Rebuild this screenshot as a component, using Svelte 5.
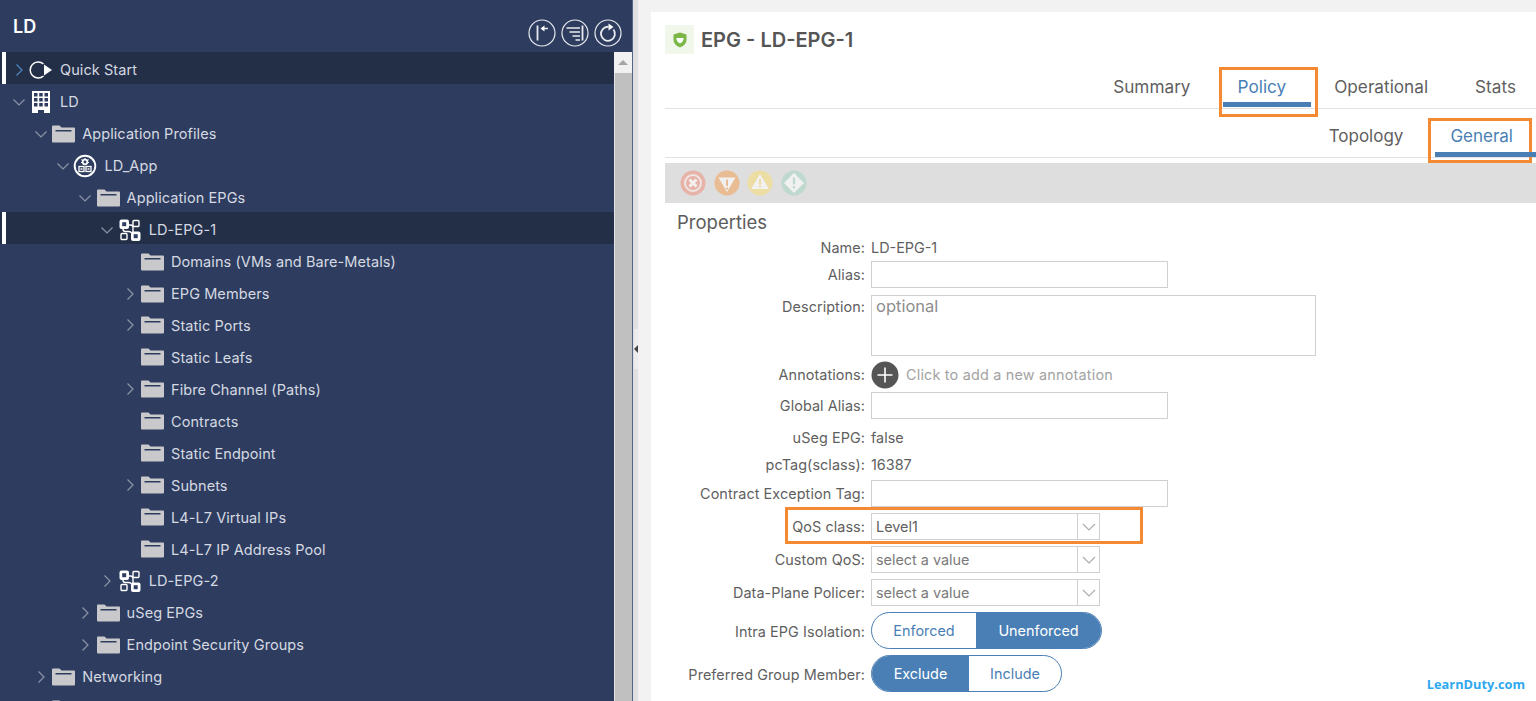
<script>
    const tree = [
        { label: "Quick Start", level: 0, arrow: "right", icon: "quick", selected: true, blue: true },
        { label: "LD", level: 0, arrow: "down", icon: "building" },
        { label: "Application Profiles", level: 1, arrow: "down", icon: "folder" },
        { label: "LD_App", level: 2, arrow: "down", icon: "app" },
        { label: "Application EPGs", level: 3, arrow: "down", icon: "folder" },
        { label: "LD-EPG-1", level: 4, arrow: "down", icon: "epg", selected: true },
        { label: "Domains (VMs and Bare-Metals)", level: 5, icon: "folder" },
        { label: "EPG Members", level: 5, arrow: "right", icon: "folder" },
        { label: "Static Ports", level: 5, arrow: "right", icon: "folder" },
        { label: "Static Leafs", level: 5, icon: "folder" },
        { label: "Fibre Channel (Paths)", level: 5, arrow: "right", icon: "folder" },
        { label: "Contracts", level: 5, icon: "folder" },
        { label: "Static Endpoint", level: 5, icon: "folder" },
        { label: "Subnets", level: 5, arrow: "right", icon: "folder" },
        { label: "L4-L7 Virtual IPs", level: 5, icon: "folder" },
        { label: "L4-L7 IP Address Pool", level: 5, icon: "folder" },
        { label: "LD-EPG-2", level: 4, arrow: "right", icon: "epg" },
        { label: "uSeg EPGs", level: 3, arrow: "right", icon: "folder" },
        { label: "Endpoint Security Groups", level: 3, arrow: "right", icon: "folder" },
        { label: "Networking", level: 1, arrow: "right", icon: "folder" },
        { icon: "folder", level: 1, arrow: "right", label: "" }
    ];
</script>

{#snippet chevron(dir)}
    <svg class="chev" width="14" height="14" viewBox="0 0 14 14" fill="none" stroke="currentColor" stroke-width="1.2">
        {#if dir === "down"}
            <path d="M1.5 4.500 7 10l5.500-5.500" />
        {:else}
            <path d="M4.500 1.500 10 7l-5.500 5.500" />
        {/if}
    </svg>
{/snippet}

{#snippet treeIcon(name)}
    {#if name === "folder"}
        <svg width="24" height="18" viewBox="0 0 24 18">
            <path d="M1 1.500q0-1 1-1h6.500l2 2H23q1 0 1 1V16.500q0 1-1 1H2q-1 0-1-1z" fill="#c9c9cb" />
            <rect x="4.500" y="5" width="16" height="1.500" fill="#2e3d5f" />
        </svg>
    {:else if name === "building"}
        <svg width="20" height="24" viewBox="0 0 20 24">
            <path d="M1 1h18v22h-6v-3H7v3H1z" fill="#fff" />
            <g fill="#2e3d5f">
                <rect x="3" y="3" width="3.500" height="3.500" /><rect x="8.200" y="3" width="3.500" height="3.500" /><rect x="13.500" y="3" width="3.500" height="3.500" />
                <rect x="3" y="8" width="3.500" height="3.500" /><rect x="8.200" y="8" width="3.500" height="3.500" /><rect x="13.500" y="8" width="3.500" height="3.500" />
                <rect x="3" y="13" width="3.500" height="3.500" /><rect x="8.200" y="13" width="3.500" height="3.500" /><rect x="13.500" y="13" width="3.500" height="3.500" />
            </g>
        </svg>
    {:else if name === "quick"}
        <svg width="24" height="18" viewBox="0 0 24 18" fill="none">
            <path d="M14.500 3A8 8 0 1 0 14.500 15" stroke="#fff" stroke-width="1.500" />
            <path d="M15 3.500 23 9l-8 5.500z" fill="#fff" />
        </svg>
    {:else if name === "app"}
        <svg width="24" height="24" viewBox="0 0 24 24" fill="none" stroke="#fff">
            <circle cx="12" cy="12" r="10.300" stroke-width="1.900" />
            <circle cx="12" cy="8" r="2.300" stroke-width="1.700" />
            <path d="M12 4v1.500M8.500 5.500 10 6.800M15.500 5.500 14 6.800M8 8.500h1.500M14.500 8.500H16" stroke-width="1.100" />
            <rect x="6" y="12.500" width="5" height="5" stroke-width="1.300" />
            <rect x="13" y="12.500" width="5" height="5" stroke-width="1.300" />
            <path d="M7.500 14h2v2h-2zM14.500 14h2v2h-2z" fill="#c9c9cb" stroke="none" />
        </svg>
    {:else if name === "epg"}
        <svg width="24" height="24" viewBox="0 0 24 24" fill="none" stroke="#fff">
            <path d="M5 11q0 2.500 2.500 2.500h3q2.500 0 3 1.500M11 7h1.500q2.500 0 2.500 2.500V14" stroke-width="1.400" />
            <rect x="1.500" y="1.500" width="9.500" height="9.500" rx="2" fill="#fff" stroke="none" />
            <rect x="4.200" y="4.200" width="4" height="4" fill="#2e3d5f" stroke="none" />
            <rect x="15" y="2.500" width="6" height="6" rx="1" stroke-width="1.400" />
            <rect x="3" y="15.500" width="6" height="6" rx="1" stroke-width="1.400" />
            <rect x="13" y="13.500" width="9.500" height="9.500" rx="2" fill="#fff" stroke="none" />
            <rect x="15.700" y="16.200" width="4" height="4" fill="#2e3d5f" stroke="none" />
        </svg>
    {/if}
{/snippet}

{#snippet field(label)}
    <span class="label">{label}</span>
{/snippet}

{#snippet dropdown(value, placeholder)}
    <div class="select" class:placeholder>
        <span class="select-value">{value}</span>
        <span class="select-btn">
            <svg width="14" height="14" viewBox="0 0 14 14" fill="none" stroke="#aaa" stroke-width="1.100">
                <path d="M1 4 7 10l6-6" />
            </svg>
        </span>
    </div>
{/snippet}

<div class="page">
    <aside class="sidebar">
        <header class="side-head">
            <h1>LD</h1>
            <div class="head-icons">
                <svg width="28" height="28" viewBox="0 0 28 28" fill="none" stroke="#e8eaef" stroke-width="1.200">
                    <circle cx="14" cy="14" r="13" />
                    <path d="M9.500 6.500v15" stroke-width="1.800" />
                    <path d="M14 9.500h6" stroke-width="1.500" />
                    <path d="M16.500 6.500l-4 3 4 3z" fill="#fff" stroke="none" />
                </svg>
                <svg width="28" height="28" viewBox="0 0 28 28" fill="none" stroke="#e8eaef" stroke-width="1.200">
                    <circle cx="14" cy="14" r="13" />
                    <path d="M5.500 9h13.500M8.500 13H19M11.500 17H19M14.500 21H19" stroke-width="1.400" />
                    <path d="M21.500 6.500v15" stroke-width="1.800" />
                </svg>
                <svg width="28" height="28" viewBox="0 0 28 28" fill="none" stroke="#e8eaef" stroke-width="1.200">
                    <circle cx="14" cy="14" r="13" />
                    <path d="M14.500 7.800A7 7 0 1 0 19.500 10.500" stroke-width="1.800" />
                    <path d="M14.500 4.500l5 3.500-5 3.500z" fill="#fff" stroke="none" />
                </svg>
            </div>
        </header>
        <div class="side-body">
            <nav class="tree">
                {#each tree as node}
                    <div class="row" class:selected={node.selected} class:blue={node.blue}>
                        <span class="indent" style="width: {node.level * 22.2}px"></span>
                        <span class="chev-slot">
                            {#if node.arrow}{@render chevron(node.arrow)}{/if}
                        </span>
                        <span class="icon-slot">{@render treeIcon(node.icon)}</span>
                        <span class="row-label">{node.label}</span>
                    </div>
                {/each}
            </nav>
            <div class="scrollbar">
                <div class="scroll-up"><span class="scroll-arrow"></span></div>
                <div class="scroll-thumb"></div>
            </div>
        </div>
    </aside>

    <div class="gutter">
        <div class="handle"><span class="handle-arrow"></span></div>
    </div>

    <main class="content">
        <div class="panel">
            <div class="title-row">
                <span class="title-icon">
                    <svg width="14" height="16" viewBox="0 0 14 16">
                        <path d="M7 .5 13.500 2.500V8q0 4.500-6.500 7.500Q.5 12.500.5 8V2.500z" fill="#7ab648" />
                        <path d="M3.500 6h7v1.500Q10 10 7 11.500 4 10 3.500 7.500z" fill="#fff" />
                    </svg>
                </span>
                <h2>EPG - LD-EPG-1</h2>
            </div>

            <div class="tabs tabs-main">
                <span class="tab">Summary</span>
                <span class="tab active">Policy<i class="mark mark-policy"></i></span>
                <span class="tab">Operational</span>
                <span class="tab">Stats</span>
            </div>
            <div class="tabs tabs-sub">
                <span class="tab">Topology</span>
                <span class="tab active">General<i class="mark mark-general"></i></span>
            </div>

            <div class="fault-bar">
                <svg width="26" height="26" viewBox="0 0 26 26">
                    <circle cx="13" cy="13" r="12.500" fill="#e7b3a8" />
                    <circle cx="13" cy="13" r="8" fill="none" stroke="#efe6e3" stroke-width="2" />
                    <path d="M9.500 9.500l7 7M16.500 9.500l-7 7" stroke="#f4f0ee" stroke-width="3" />
                </svg>
                <svg width="26" height="26" viewBox="0 0 26 26">
                    <circle cx="13" cy="13" r="12.500" fill="#e9bc93" />
                    <path d="M4.500 7.500h17L13 22z" fill="#f1f1f1" />
                    <path d="M13 9.500v6.500M13 17.500v2" stroke="#e9bc93" stroke-width="2" />
                </svg>
                <svg width="26" height="26" viewBox="0 0 26 26">
                    <circle cx="13" cy="13" r="12.500" fill="#ecdda3" />
                    <path d="M13 4 22 19H4z" fill="#f1f1f1" />
                    <path d="M13 9v5.500M13 15.500v2" stroke="#ecdda3" stroke-width="2" />
                </svg>
                <svg width="26" height="26" viewBox="0 0 26 26">
                    <circle cx="13" cy="13" r="12.500" fill="#bfd9cf" />
                    <path d="M13 3 23 13 13 23 3 13z" fill="#f1f1f1" />
                    <path d="M13 7.500v7M13 16v2.500" stroke="#bfd9cf" stroke-width="2.200" />
                </svg>
            </div>

            <h3>Properties</h3>

            <div class="form">
                <div class="form-row r-name">{@render field("Name:")}<span class="value">LD-EPG-1</span></div>
                <div class="form-row r-input">{@render field("Alias:")}<div class="input"></div></div>
                <div class="form-row r-desc">{@render field("Description:")}<div class="textarea">optional</div></div>
                <div class="form-row r-anno">
                    {@render field("Annotations:")}
                    <span class="add-btn">
                        <svg width="28" height="28" viewBox="0 0 28 28">
                            <circle cx="14" cy="14" r="13.500" fill="#555" />
                            <path d="M14 6.500v15M6.500 14h15" stroke="#fff" stroke-width="1.600" />
                        </svg>
                    </span>
                    <span class="hint">Click to add a new annotation</span>
                </div>
                <div class="form-row r-input r-global">{@render field("Global Alias:")}<div class="input"></div></div>
                <div class="form-row r-text r-useg">{@render field("uSeg EPG:")}<span class="value">false</span></div>
                <div class="form-row r-text r-pc">{@render field("pcTag(sclass):")}<span class="value">16387</span></div>
                <div class="form-row r-input r-contract">{@render field("Contract Exception Tag:")}<div class="input"></div></div>
                <div class="form-row r-select r-qos">
                    {@render field("QoS class:")}
                    {@render dropdown("Level1", false)}
                    <i class="mark mark-qos"></i>
                </div>
                <div class="form-row r-select">{@render field("Custom QoS:")}{@render dropdown("select a value", true)}</div>
                <div class="form-row r-select">{@render field("Data-Plane Policer:")}{@render dropdown("select a value", true)}</div>
                <div class="form-row r-toggle">
                    {@render field("Intra EPG Isolation:")}
                    <div class="toggle">
                        <span class="opt opt-enforced">Enforced</span>
                        <span class="opt on opt-unenforced">Unenforced</span>
                    </div>
                </div>
                <div class="form-row r-toggle r-pref">
                    {@render field("Preferred Group Member:")}
                    <div class="toggle">
                        <span class="opt on opt-exclude">Exclude</span>
                        <span class="opt opt-include">Include</span>
                    </div>
                </div>
            </div>
            <span class="watermark">LearnDuty.com</span>
        </div>
    </main>
</div>

<style>
    :global(body) {
        margin: 0;
        background: #f2f2f2;
    }

    .page {
        display: flex;
        width: 1536px;
        height: 701px;
        overflow: hidden;
        font-family: Inter, "Liberation Sans", sans-serif;
    }

    /* left tree */
    .sidebar {
        width: 632px;
        flex: none;
        display: flex;
        flex-direction: column;
        background: #2e3d5f;
        border-right: 1px solid #55648a;
    }

    .side-head {
        height: 52px;
        flex: none;
        display: flex;
        align-items: center;
        justify-content: space-between;
        padding: 0 10px 0 13px;
    }

    .side-head h1 {
        margin: 0;
        font-size: 18px;
        font-weight: 600;
        color: #fff;
    }

    .head-icons {
        display: flex;
        gap: 5px;
        margin-top: 14px;
    }

    .side-body {
        flex: 1;
        display: flex;
        min-height: 0;
    }

    .tree {
        width: 614px;
        flex: none;
    }

    .row {
        height: 31.95px;
        display: flex;
        align-items: center;
        color: #d5d9e2;
        font-size: 14.5px;
        letter-spacing: 0.08px;
        white-space: nowrap;
        box-sizing: border-box;
        padding: 4px 0 0 6px;
    }

    .row.selected {
        background: #232f47;
        position: relative;
    }

    .row.selected::before {
        content: "";
        position: absolute;
        left: 2px;
        top: 0;
        bottom: 0;
        width: 4px;
        background: #fff;
    }

    .indent {
        flex: none;
    }

    .chev-slot {
        width: 13px;
        flex: none;
        display: flex;
        justify-content: center;
        color: #8c94a6;
        margin-left: 6px;
    }

    .row.blue .chev-slot {
        color: #4f86c0;
    }

    .chev {
        display: block;
        flex: none;
    }

    .icon-slot {
        width: 24px;
        flex: none;
        display: flex;
        justify-content: center;
        margin-left: 4px;
    }

    .icon-slot svg {
        display: block;
    }

    .row-label {
        margin-left: 7px;
    }

    .scrollbar {
        width: 18px;
        flex: none;
        display: flex;
        flex-direction: column;
        background: #c0c0c0;
    }

    .scroll-up {
        height: 21px;
        background: #f1f1f1;
        display: flex;
        align-items: center;
        justify-content: center;
    }

    .scroll-arrow {
        width: 0;
        height: 0;
        border-left: 5px solid transparent;
        border-right: 5px solid transparent;
        border-bottom: 5px solid #a5a5a5;
    }

    .scroll-thumb {
        flex: 1;
        border-left: 1px solid #e4e4e4;
    }

    /* splitter */
    .gutter {
        width: 5px;
        flex: none;
        background: #e0e0e0;
        display: flex;
        align-items: center;
        justify-content: center;
        padding-bottom: 4px;
        box-sizing: border-box;
    }

    .handle {
        width: 4px;
        height: 40px;
        background: #ececec;
        display: flex;
        align-items: center;
        justify-content: center;
    }

    .handle-arrow {
        width: 0;
        height: 0;
        border-top: 4px solid transparent;
        border-bottom: 4px solid transparent;
        border-right: 4px solid #444;
    }

    /* right panel */
    .content {
        flex: 1;
        min-width: 0;
        background: #f2f2f2;
        padding: 12px 0 0 13px;
    }

    .panel {
        position: relative;
        height: 100%;
        background: #fff;
        padding-left: 14px;
        color: #5c5c5c;
    }

    .title-row {
        height: 29px;
        padding-top: 13px;
        display: flex;
        align-items: center;
        gap: 7px;
    }

    .title-icon {
        width: 29px;
        height: 29px;
        background: #f1f7ea;
        display: flex;
        align-items: center;
        justify-content: center;
    }

    .title-row h2 {
        margin: 0;
        font-size: 20px;
        font-weight: 600;
        color: #555;
    }

    .tabs {
        display: flex;
        justify-content: flex-end;
        border-bottom: 1px solid #e2e2e2;
        font-size: 17px;
        box-sizing: border-box;
    }

    .tabs-main {
        height: 55px;
        padding-top: 21px;
        font-size: 17.2px;
    }

    .tabs-sub {
        height: 49px;
        padding-top: 15px;
    }

    .tab {
        position: relative;
        color: #5f5f5f;
        line-height: 24px;
    }

    .tab.active {
        color: #4a7fb5;
    }

    .tabs-main .tab:nth-child(1) { margin-right: 47px; }
    .tabs-main .tab:nth-child(2) { margin-right: 48px; }
    .tabs-main .tab:nth-child(3) { margin-right: 47px; }
    .tabs-main .tab:nth-child(4) { margin-right: 20px; }
    .tabs-sub .tab:nth-child(1) { margin-right: 47px; }
    .tabs-sub .tab:nth-child(2) { margin-right: 23px; }

    .mark {
        position: absolute;
        display: block;
        box-sizing: border-box;
        border: 3px solid #f58a33;
        pointer-events: none;
    }

    .mark-policy {
        left: -19px;
        top: -8px;
        width: 99px;
        height: 50px;
    }

    .mark-policy::after,
    .mark-general::after {
        content: "";
        position: absolute;
        height: 5px;
        background: #4a7fb5;
    }

    .mark-policy::after {
        left: 1px;
        right: 4px;
        bottom: 7px;
    }

    .mark-general {
        left: -22px;
        top: -6px;
        width: 104px;
        height: 45px;
    }

    .mark-general::after {
        left: 4px;
        right: -7px;
        bottom: 3px;
    }

    .fault-bar {
        height: 40px;
        margin-top: 5px;
        background: #dedede;
        display: flex;
        align-items: center;
        gap: 7.500px;
        padding-left: 15px;
    }

    .fault-bar svg {
        display: block;
    }

    h3 {
        margin: 0;
        padding: 1px 0 0 12px;
        font-size: 18.500px;
        font-weight: 400;
        line-height: 36px;
        color: #5c5c5c;
    }

    .form {
        font-size: 14.4px;
    }

    .form-row {
        position: relative;
        display: flex;
        align-items: center;
        gap: 6px;
        height: 27px;
    }

    .label {
        width: 200px;
        flex: none;
        text-align: right;
        color: #5f5f5f;
        white-space: nowrap;
        letter-spacing: 0.08px;
    }

    .value {
        color: #5f5f5f;
    }

    .r-name { height: 27px; margin-top: -6px; }
    .r-desc { height: 61px; margin-top: 7px; align-items: flex-start; }
    .r-desc .label { padding-top: 3px; }
    .r-anno { height: 27px; margin-top: 5px; }
    .r-global { margin-top: 4px; }
    .r-useg { margin-top: 5px; }
    .r-pc { margin-top: 0; }
    .r-contract { margin-top: 2px; }
    .r-qos { margin-top: 6px; }
    .r-select { height: 27px; margin-bottom: 6px; }
    .r-toggle { height: 37px; margin-bottom: 6px; margin-top: 1px; }
    .r-pref { margin-top: 0; }
    .r-toggle .label { padding-top: 2px; }

    .input {
        width: 297px;
        height: 27px;
        box-sizing: border-box;
        border: 1px solid #d0d0d0;
        background: #fff;
    }

    .textarea {
        width: 445px;
        height: 61px;
        box-sizing: border-box;
        border: 1px solid #d0d0d0;
        padding: 0 4px;
        font-size: 16.500px;
        color: #8d8d8d;
    }

    .add-btn {
        width: 28px;
        height: 28px;
        flex: none;
    }

    .add-btn svg {
        display: block;
    }

    .hint {
        color: #a3a3a3;
        margin-left: 1px;
        letter-spacing: 0.2px;
    }

    .select {
        width: 229px;
        height: 27px;
        box-sizing: border-box;
        border: 1px solid #d0d0d0;
        display: flex;
        align-items: center;
        justify-content: space-between;
        color: #5f5f5f;
    }

    .select.placeholder {
        color: #7a7a7a;
    }

    .select-value {
        padding-left: 4px;
    }

    .select-btn {
        width: 21px;
        height: 100%;
        border-left: 1px solid #d0d0d0;
        display: flex;
        align-items: center;
        justify-content: center;
    }

    .mark-qos {
        left: 120px;
        top: -6px;
        width: 358px;
        height: 37px;
    }

    .toggle {
        display: flex;
        height: 37px;
        box-sizing: border-box;
        border: 1px solid #4a7fb5;
        border-radius: 19px;
        overflow: hidden;
    }

    .opt {
        display: flex;
        align-items: center;
        justify-content: center;
        color: #4a7fb5;
    }

    .opt.on {
        background: #4a7fb5;
        color: #fff;
    }

    .opt-enforced { width: 104px; }
    .opt-unenforced { width: 125px; }
    .opt-exclude { width: 97px; }
    .opt-include { width: 92px; }

    .watermark {
        position: absolute;
        right: 11px;
        bottom: 8px;
        font-family: "Open Sans", sans-serif;
        font-weight: 700;
        font-size: 12.800px;
        color: #2ea8ee;
    }
</style>
